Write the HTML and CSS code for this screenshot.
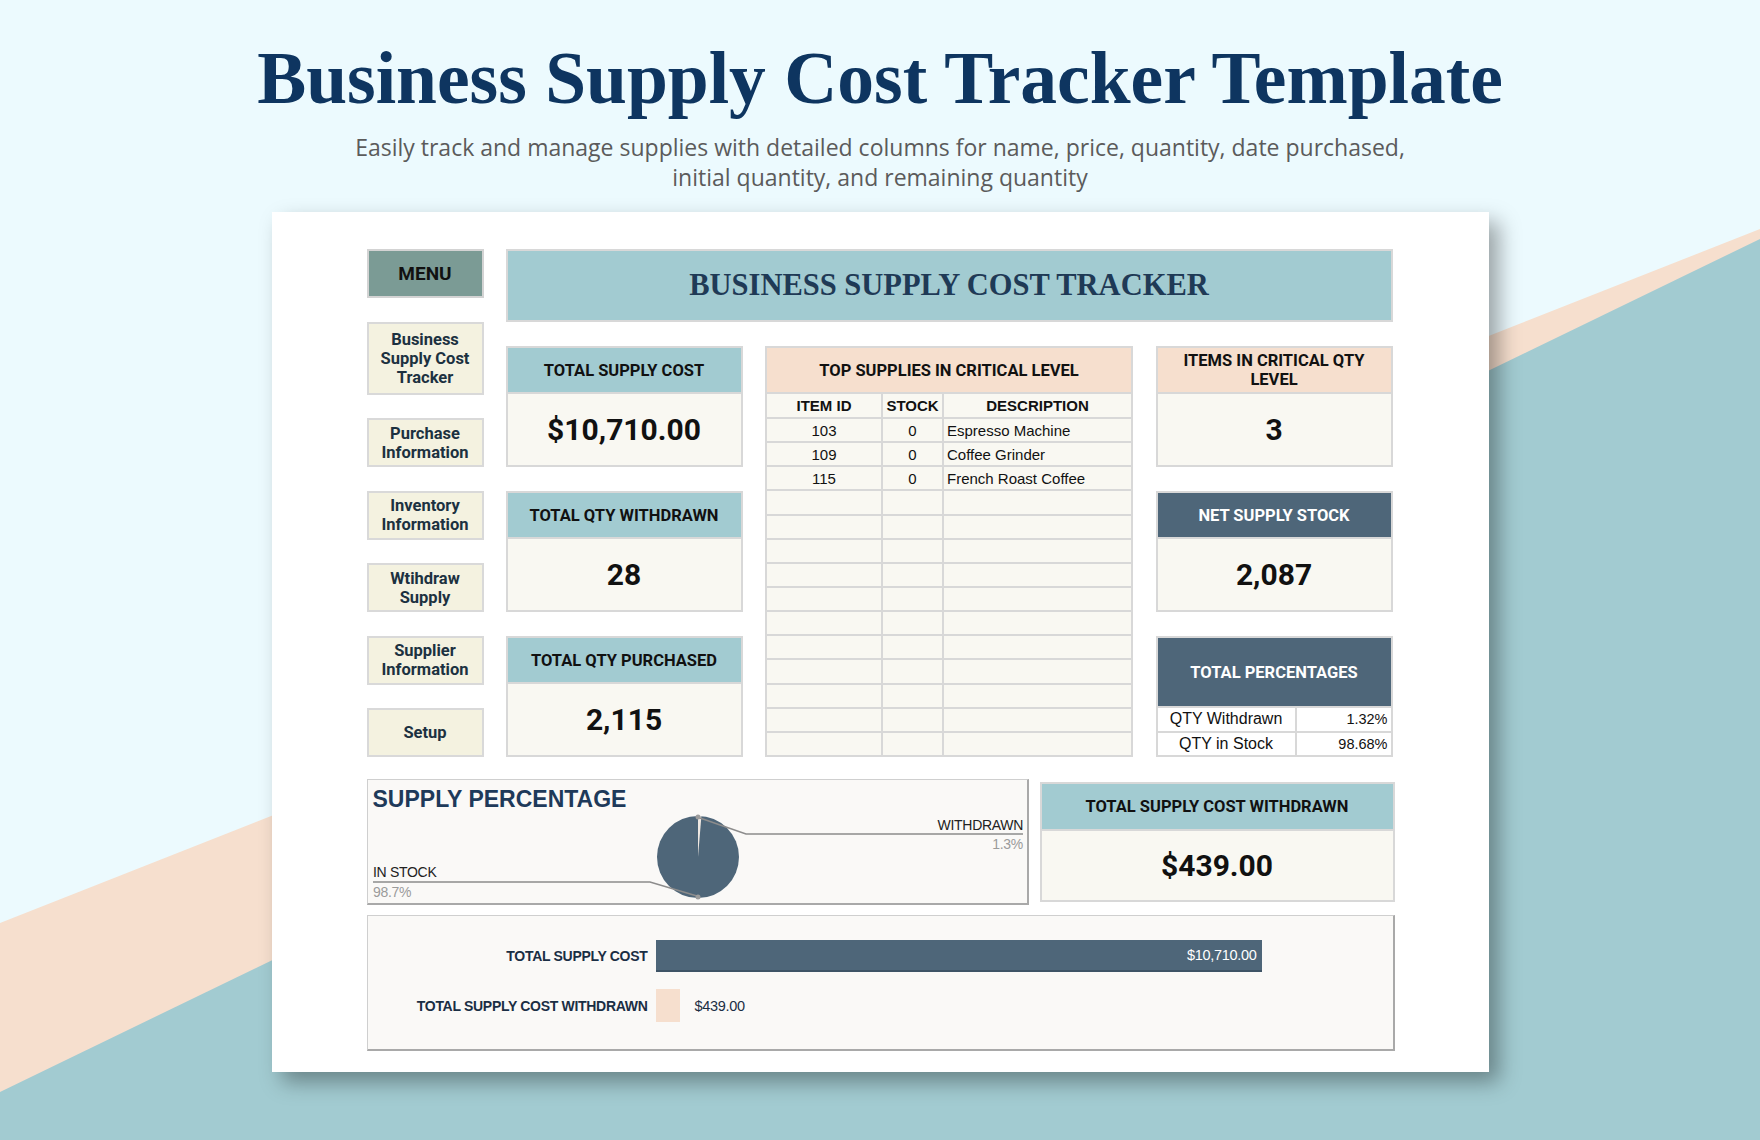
FILE: index.html
```html
<!DOCTYPE html>
<html lang="en">
<head>
    <meta charset="UTF-8">
    <title>Business Supply Cost Tracker Template</title>
    <link rel="stylesheet" href="styles.css">
</head>
<body>
    <svg class="backdrop" viewBox="0 0 1760 1140" preserveAspectRatio="none">
        <polygon points="0,923 1760,229 1760,1140 0,1140" fill="#f6dfce"/>
        <polygon points="0,1092 1760,239 1760,1140 0,1140" fill="#a2cbd1"/>
    </svg>
    <div class="page">
        <h1>Business Supply Cost Tracker Template</h1>
        <p class="lead">Easily track and manage supplies with detailed columns for name, price, quantity, date purchased,<br>initial quantity, and remaining quantity</p>

        <div class="sheet">
            <div class="top">
                <nav class="menu">
                    <div class="menu-title">MENU</div>
                    <div class="menu-item tall">Business<br>Supply Cost<br>Tracker</div>
                    <div class="menu-item">Purchase<br>Information</div>
                    <div class="menu-item">Inventory<br>Information</div>
                    <div class="menu-item">Wtihdraw<br>Supply</div>
                    <div class="menu-item">Supplier<br>Information</div>
                    <div class="menu-item">Setup</div>
                </nav>

                <div class="main">
                    <div class="banner">BUSINESS SUPPLY COST TRACKER</div>
                    <div class="boards">
                        <div class="col">
                            <div class="kpi">
                                <div class="kpi-head teal">TOTAL SUPPLY COST</div>
                                <div class="kpi-value">$10,710.00</div>
                            </div>
                            <div class="kpi">
                                <div class="kpi-head teal">TOTAL QTY WITHDRAWN</div>
                                <div class="kpi-value">28</div>
                            </div>
                            <div class="kpi">
                                <div class="kpi-head teal">TOTAL QTY PURCHASED</div>
                                <div class="kpi-value">2,115</div>
                            </div>
                        </div>

                        <div class="critical">
                            <div class="crit-title">TOP SUPPLIES IN CRITICAL LEVEL</div>
                            <div class="th">ITEM ID</div><div class="th">STOCK</div><div class="th">DESCRIPTION</div>
                            <div class="td">103</div><div class="td">0</div><div class="td desc">Espresso Machine</div>
                            <div class="td">109</div><div class="td">0</div><div class="td desc">Coffee Grinder</div>
                            <div class="td">115</div><div class="td">0</div><div class="td desc">French Roast Coffee</div>
                            <div class="td"></div><div class="td"></div><div class="td"></div>
                            <div class="td"></div><div class="td"></div><div class="td"></div>
                            <div class="td"></div><div class="td"></div><div class="td"></div>
                            <div class="td"></div><div class="td"></div><div class="td"></div>
                            <div class="td"></div><div class="td"></div><div class="td"></div>
                            <div class="td"></div><div class="td"></div><div class="td"></div>
                            <div class="td"></div><div class="td"></div><div class="td"></div>
                            <div class="td"></div><div class="td"></div><div class="td"></div>
                            <div class="td"></div><div class="td"></div><div class="td"></div>
                            <div class="td"></div><div class="td"></div><div class="td"></div>
                            <div class="td"></div><div class="td"></div><div class="td"></div>
                        </div>

                        <div class="col">
                            <div class="kpi">
                                <div class="kpi-head peach">ITEMS IN CRITICAL QTY<br>LEVEL</div>
                                <div class="kpi-value">3</div>
                            </div>
                            <div class="kpi">
                                <div class="kpi-head slate">NET SUPPLY STOCK</div>
                                <div class="kpi-value">2,087</div>
                            </div>
                            <div class="kpi pct">
                                <div class="kpi-head slate">TOTAL PERCENTAGES</div>
                                <div class="pct-row"><span>QTY Withdrawn</span><span class="num">1.32%</span></div>
                                <div class="pct-row"><span>QTY in Stock</span><span class="num">98.68%</span></div>
                            </div>
                        </div>
                    </div>
                </div>
            </div>

            <div class="bottom">
                <div class="pie-box">
                    <div class="pie-title">SUPPLY PERCENTAGE</div>
                    <svg class="pie-chart" viewBox="0 0 660 124" width="660" height="124">
                        <circle cx="330" cy="77" r="41" fill="#4e6679"/>
                        <path d="M330,77 L330,36 A41,41 0 0 1 333.4,36.14 Z" fill="#efe8e2"/>
                        <polyline points="332,38 378,54 655,54" fill="none" stroke="#8c8c8c" stroke-width="1.5"/>
                        <polyline points="329,116 282,102 5,102" fill="none" stroke="#8c8c8c" stroke-width="1.5"/>
                        <circle cx="330" cy="37" r="2.5" fill="#9c9c9c"/>
                        <circle cx="330" cy="117" r="2.5" fill="#9c9c9c"/>
                        <text x="655" y="50" text-anchor="end" class="lbl">WITHDRAWN</text>
                        <text x="655" y="69" text-anchor="end" class="lbl pctv">1.3%</text>
                        <text x="5" y="97" class="lbl">IN STOCK</text>
                        <text x="5" y="117" class="lbl pctv">98.7%</text>
                    </svg>
                </div>
                <div class="kpi wide">
                    <div class="kpi-head teal">TOTAL SUPPLY COST WITHDRAWN</div>
                    <div class="kpi-value">$439.00</div>
                </div>
            </div>

            <div class="bars">
                <div class="bar-row">
                    <div class="bar-label">TOTAL SUPPLY COST</div>
                    <div class="bar dark" style="width:606px">$10,710.00</div>
                </div>
                <div class="bar-row">
                    <div class="bar-label">TOTAL SUPPLY COST WITHDRAWN</div>
                    <div class="bar light" style="width:24px"></div>
                    <div class="bar-value">$439.00</div>
                </div>
            </div>
        </div>
    </div>
</body>
</html>
```

FILE: styles.css
```css
* {
    box-sizing: border-box;
}
body {
    margin: 0;
    height: 1140px;
    overflow: hidden;
    position: relative;
    background: #ecfafe;
    font-family: Roboto, 'Liberation Sans', sans-serif;
    color: #111;
}
.backdrop {
    position: absolute;
    left: 0;
    top: 0;
    width: 100%;
    height: 100%;
}
.page {
    position: relative;
    padding-top: 36px;
}
h1 {
    margin: 0;
    text-align: center;
    font-family: 'Liberation Serif', serif;
    font-size: 73.5px;
    line-height: 86px;
    font-weight: bold;
    color: #0e3560;
}
.lead {
    margin: 10px 0 0;
    text-align: center;
    font-family: 'Open Sans', sans-serif;
    font-size: 23px;
    line-height: 30px;
    color: #5b5b5b;
}

/* white sheet */
.sheet {
    width: 1217px;
    height: 860px;
    margin: 20px auto 0;
    padding: 37px 94px 0 95px;
    background: #fff;
    box-shadow: 10px 10px 20px rgba(0,0,0,0.35);
}
.top {
    display: flex;
    gap: 22px;
}

/* menu */
.menu {
    width: 117px;
    display: flex;
    flex-direction: column;
    gap: 23.5px;
}
.menu-title {
    height: 49px;
    display: flex;
    align-items: center;
    justify-content: center;
    background: #7b9b95;
    border: 2px solid #d3d3d3;
    font-size: 19px;
    font-weight: bold;
}
.menu-item {
    height: 49px;
    display: flex;
    align-items: center;
    justify-content: center;
    text-align: center;
    background: #f4f2e0;
    border: 2px solid #d9d9d9;
    font-size: 16.5px;
    line-height: 19px;
    font-weight: bold;
    color: #1c3140;
}
.menu-item.tall {
    height: 73px;
}

/* main board */
.main {
    width: 887px;
}
.banner {
    height: 73px;
    display: flex;
    align-items: center;
    justify-content: center;
    background: #a2cbd1;
    border: 2px solid #d8d8d8;
    font-family: 'Liberation Serif', serif;
    font-size: 30.5px;
    font-weight: bold;
    color: #1f3a56;
}
.boards {
    margin-top: 24px;
    display: flex;
    justify-content: space-between;
}
.col {
    width: 237px;
    display: flex;
    flex-direction: column;
    gap: 24px;
}
.kpi {
    height: 121px;
    display: flex;
    flex-direction: column;
    background: #f9f8f2;
    border: 2px solid #d8d8d8;
}
.kpi-head {
    height: 46px;
    display: flex;
    align-items: center;
    justify-content: center;
    text-align: center;
    border-bottom: 2px solid #d8d8d8;
    font-size: 16.5px;
    line-height: 19px;
    font-weight: bold;
}
.teal { background: #a2cbd1; }
.peach { background: #f6dfce; }
.slate { background: #4e6679; color: #fff; }
.kpi-value {
    flex: 1;
    display: flex;
    align-items: center;
    justify-content: center;
    font-size: 30px;
    font-weight: bold;
}

/* critical supplies table */
.critical {
    width: 368px;
    height: 411px;
    display: grid;
    grid-template-columns: 116px 61px 189px;
    grid-template-rows: 46px 25px repeat(14, 1fr);
    background: #f9f8f2;
    border-top: 2px solid #d8d8d8;
    border-left: 2px solid #d8d8d8;
    font-family: 'Liberation Sans', Arial, sans-serif;
    font-size: 15px;
}
.crit-title {
    grid-column: 1 / 4;
    display: flex;
    align-items: center;
    justify-content: center;
    background: #f6dfce;
    border-right: 2px solid #d8d8d8;
    border-bottom: 2px solid #d8d8d8;
    font-family: Roboto, sans-serif;
    font-size: 16.5px;
    font-weight: bold;
}
.th, .td {
    display: flex;
    align-items: center;
    justify-content: center;
    border-right: 2px solid #d8d8d8;
    border-bottom: 2px solid #d8d8d8;
}
.th {
    font-weight: bold;
}
.td.desc {
    justify-content: flex-start;
    padding-left: 3px;
}

/* percentages */
.pct {
    background: #fff;
}
.pct .kpi-head {
    height: 70px;
}
.pct-row {
    flex: 1;
    display: grid;
    grid-template-columns: 139px 1fr;
    font-family: 'Liberation Sans', Arial, sans-serif;
    font-size: 16px;
}
.pct-row + .pct-row {
    border-top: 2px solid #d8d8d8;
}
.pct-row span {
    display: flex;
    align-items: center;
    justify-content: center;
    border-right: 2px solid #d8d8d8;
}
.pct-row .num {
    justify-content: flex-end;
    padding-right: 3px;
    border-right: none;
    font-size: 14.5px;
}

/* bottom row */
.bottom {
    margin-top: 22px;
    display: flex;
    justify-content: space-between;
    align-items: center;
}
.pie-box {
    position: relative;
    width: 662px;
    height: 126px;
    background: #faf9f7;
    border: 1px solid #cfcfcf;
    border-right: 2px solid #a9a9a9;
    border-bottom: 2px solid #a9a9a9;
}
.pie-title {
    position: relative;
    z-index: 1;
    padding: 6px 0 0 5px;
    font-family: 'Liberation Sans', Arial, sans-serif;
    font-size: 23px;
    line-height: 26px;
    font-weight: bold;
    color: #1e3a5a;
}
.pie-chart {
    position: absolute;
    left: 0;
    top: 0;
}
.lbl {
    font-family: 'Liberation Sans', Arial, sans-serif;
    font-size: 14px;
    letter-spacing: -0.3px;
    fill: #222;
}
.lbl.pctv {
    fill: #9b9b9b;
}
.kpi.wide {
    width: 355px;
    height: 120px;
}
.kpi.wide .kpi-head {
    height: 47px;
}

/* bar chart */
.bars {
    margin-top: 10px;
    height: 136px;
    padding-top: 23px;
    display: flex;
    flex-direction: column;
    gap: 17px;
    background: #faf9f7;
    border: 1px solid #cfcfcf;
    border-right: 2px solid #a9a9a9;
    border-bottom: 2px solid #a9a9a9;
}
.bar-row {
    height: 33px;
    display: flex;
    align-items: center;
}
.bar-label {
    width: 280px;
    margin-right: 8px;
    text-align: right;
    font-family: 'Liberation Sans', Arial, sans-serif;
    font-size: 14px;
    font-weight: bold;
    letter-spacing: -0.3px;
    color: #1a2e44;
}
.bar {
    height: 33px;
    display: flex;
    align-items: center;
    justify-content: flex-end;
    padding-right: 5px;
    font-family: 'Liberation Sans', Arial, sans-serif;
    font-size: 14.5px;
    letter-spacing: -0.3px;
    color: #fff;
}
.bar.dark {
    height: 32px;
    background: #4e6679;
    border-bottom: 2px solid #3e5466;
}
.bar.light {
    background: #f6dfce;
}
.bar-value {
    margin-left: 15px;
    font-family: 'Liberation Sans', Arial, sans-serif;
    font-size: 14.5px;
    letter-spacing: -0.3px;
    color: #1a2e44;
}
```
